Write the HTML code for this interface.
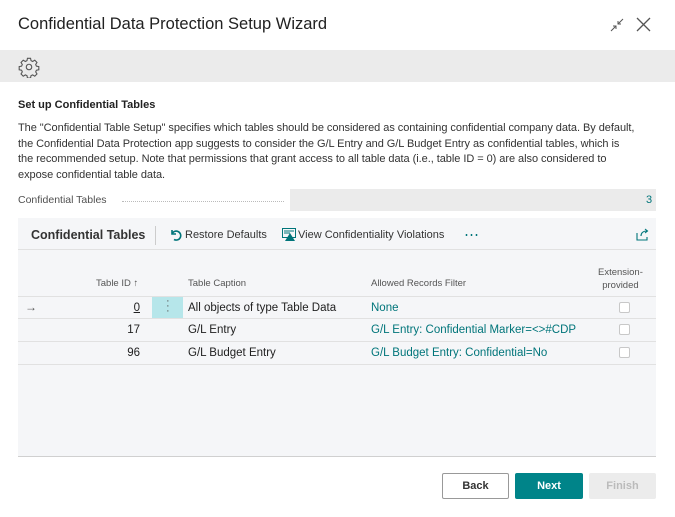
<!DOCTYPE html>
<html><head><meta charset="utf-8"><style>
*{box-sizing:border-box;margin:0;padding:0}
body{width:675px;height:517px;background:#fff;font-family:"Liberation Sans",sans-serif;color:#212121;position:relative;overflow:hidden}
.a{position:absolute;white-space:nowrap}
.teal{color:#00757a}
.row{position:absolute;left:18px;width:638px;border-bottom:1px solid #e1e1e1}
.cb{position:absolute;left:619px;width:11px;height:11px;border:1px solid #c8c8c8;border-radius:2px;background:#fff}
</style></head><body>
<div class="a" style="left:18px;top:15px;font-size:16.5px;color:#212121">Confidential Data Protection Setup Wizard</div>
<svg class="a" style="left:610px;top:18px" width="14" height="14" viewBox="0 0 14 14" fill="none" stroke="#555" stroke-width="1"><path d="M13 1 8 6M8 3v3h3M1 13l5-5M3 8h3v3"/></svg>
<svg class="a" style="left:636px;top:17px" width="15" height="15" viewBox="0 0 15 15" stroke="#555" stroke-width="1.3"><path d="M1 1l13 13M14 1 1 14"/></svg>
<div class="a" style="left:0;top:50px;width:675px;height:32px;background:#ebebeb"></div>
<svg class="a" style="left:18px;top:56px" width="22" height="22" viewBox="0 0 24 24" fill="none" stroke="#555" stroke-width="1.2"><circle cx="12" cy="12" r="3"/><path d="M10.3 2.5h3.4l.5 2.6 1.8.9 2.3-1.4 2.4 2.4-1.4 2.3.8 1.8 2.6.5v3.4l-2.6.5-.8 1.8 1.4 2.3-2.4 2.4-2.3-1.4-1.8.8-.5 2.6h-3.4l-.5-2.6-1.8-.8-2.3 1.4-2.4-2.4 1.4-2.3-.8-1.8-2.6-.5v-3.4l2.6-.5.8-1.8-1.4-2.3 2.4-2.4 2.3 1.4 1.8-.9z"/></svg>
<div class="a" style="left:18px;top:99px;font-size:11px;font-weight:bold">Set up Confidential Tables</div>
<div class="a" style="left:18px;top:121px;font-size:11px;line-height:15.5px;color:#333;letter-spacing:-0.05px">The "Confidential Table Setup" specifies which tables should be considered as containing confidential company data. By default,<br>the Confidential Data Protection app suggests to consider the G/L Entry and G/L Budget Entry as confidential tables, which is<br>the recommended setup. Note that permissions that grant access to all table data (i.e., table ID = 0) are also considered to<br>expose confidential table data.</div>
<div class="a" style="left:18px;top:194px;font-size:10.5px;color:#505050">Confidential Tables</div>
<div class="a" style="left:122px;top:193px;width:162px;border-bottom:1px dotted #bbb;height:9px"></div>
<div class="a" style="left:290px;top:189px;width:366px;height:22px;background:#ebebeb"></div>
<div class="a teal" style="left:646px;top:194px;font-size:11px">3</div>
<div class="a" style="left:18px;top:218px;width:638px;height:239px;background:#f5f6f8;border-bottom:1px solid #d0d0d0"></div>
<div class="a" style="left:31px;top:228px;font-size:12.5px;font-weight:bold;color:#333">Confidential Tables</div>
<div class="a" style="left:155px;top:226px;width:1px;height:19px;background:#ccc"></div>
<svg class="a" style="left:170px;top:229px" width="12" height="12" viewBox="0 0 12 12" fill="none" stroke="#00757a" stroke-width="1.6"><path d="M2 1v4h4M2 5a4.5 4.5 0 1 1 2 5.5"/></svg>
<div class="a" style="left:185px;top:229px;font-size:11px;color:#333">Restore Defaults</div>
<svg class="a" style="left:282px;top:228px" width="14" height="13" viewBox="0 0 14 13"><rect x="0.5" y="0.5" width="13" height="9" fill="none" stroke="#00757a"/><path d="M2 3h10M2 5h6" stroke="#00757a"/><path d="M8 5l5 8H3z" fill="#00757a"/></svg>
<div class="a" style="left:298px;top:229px;font-size:11px;color:#333">View Confidentiality Violations</div>
<div class="a" style="left:464px;top:234px;width:14px;height:2px;background:radial-gradient(circle,#00757a 0.8px,transparent 1px) 0 0/5px 2px repeat-x"></div>
<svg class="a" style="left:636px;top:228px" width="13" height="13" viewBox="0 0 13 13" fill="none" stroke="#00757a" stroke-width="1.1"><path d="M1 5v7h10V9M5 8c0-3 2-5 6-5M9 1l2.5 2L9 5"/></svg>
<div class="a" style="left:18px;top:249px;width:638px;height:1px;background:#e1e1e1"></div>
<div class="a" style="left:96px;top:278px;font-size:9.5px;color:#555">Table ID ↑</div>
<div class="a" style="left:188px;top:278px;font-size:9.5px;color:#555">Table Caption</div>
<div class="a" style="left:371px;top:278px;font-size:9.5px;color:#555">Allowed Records Filter</div>
<div class="a" style="left:598px;top:266px;font-size:9.5px;color:#555;text-align:center;line-height:13px">Extension-<br>provided</div>
<div class="row" style="top:296px;height:0;border-top:1px solid #e1e1e1;border-bottom:none"></div>
<div class="row" style="top:297px;height:22px"></div>
<div class="row" style="top:319px;height:23px"></div>
<div class="row" style="top:342px;height:23px"></div>
<div class="a" style="left:152px;top:297px;width:31px;height:21px;background:#b6e6ea"></div>
<div class="a" style="left:166px;top:299px;font-size:11px;color:#555;line-height:5px">·<br>·<br>·</div>
<div class="a" style="left:25px;top:300px;font-size:12px;color:#555">→</div>
<div class="a" style="left:117px;top:302px;font-size:11.5px;width:23px;text-align:right;text-decoration:underline">0</div>
<div class="a" style="left:188px;top:302px;font-size:11.5px">All objects of type Table Data</div>
<div class="a teal" style="left:371px;top:302px;font-size:11.5px">None</div>
<div class="cb" style="top:302px"></div>
<div class="a" style="left:100px;top:324px;font-size:11.5px;width:40px;text-align:right">17</div>
<div class="a" style="left:188px;top:324px;font-size:11.5px">G/L Entry</div>
<div class="a teal" style="left:371px;top:324px;font-size:11.5px">G/L Entry: Confidential Marker=&lt;&gt;#CDP</div>
<div class="cb" style="top:324px"></div>
<div class="a" style="left:100px;top:347px;font-size:11.5px;width:40px;text-align:right">96</div>
<div class="a" style="left:188px;top:347px;font-size:11.5px">G/L Budget Entry</div>
<div class="a teal" style="left:371px;top:347px;font-size:11.5px">G/L Budget Entry: Confidential=No</div>
<div class="cb" style="top:347px"></div>
<div class="a" style="left:442px;top:473px;width:67px;height:26px;border:1px solid #999;border-radius:2px;font-size:11px;font-weight:bold;color:#333;text-align:center;line-height:24px">Back</div>
<div class="a" style="left:515px;top:473px;width:68px;height:26px;background:#008489;border-radius:2px;font-size:11px;font-weight:bold;color:#fff;text-align:center;line-height:26px">Next</div>
<div class="a" style="left:589px;top:473px;width:67px;height:26px;background:#ececec;border-radius:2px;font-size:11px;font-weight:bold;color:#bbb;text-align:center;line-height:26px">Finish</div>
</body></html>
